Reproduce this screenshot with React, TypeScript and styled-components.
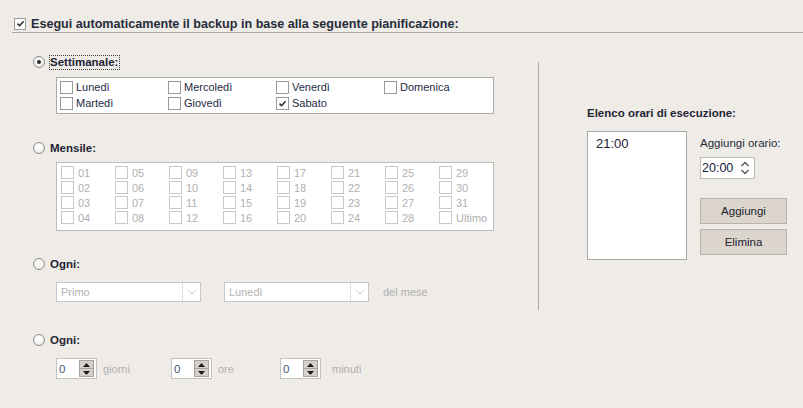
import styled, { createGlobalStyle } from 'styled-components';

const GlobalStyle = createGlobalStyle`
  html, body {
    margin: 0;
    padding: 0;
  }
  body {
    background: #efebe7;
    font-family: "Liberation Sans", Arial, sans-serif;
    font-size: 11px;
    color: #1f2a3c;
  }
`;

const Page = styled.div`
  width: 803px;
  height: 408px;
  overflow: hidden;
`;

const Header = styled.label`
  display: flex;
  align-items: center;
  gap: 5px;
  height: 15px;
  padding: 16px 0 0 14px;
`;

const HeaderTitle = styled.span`
  font-weight: bold;
  font-size: 12.6px;
  color: #262b3a;
`;

const Rule = styled.div`
  margin: 1px 0 0 12px;
  border-top: 1px solid #a8a8a8;
`;

const Main = styled.div`
  display: flex;
`;

const LeftCol = styled.div`
  box-sizing: border-box;
  width: 538px;
  padding-left: 33px;
  display: flex;
  flex-direction: column;
`;

const Divider = styled.div`
  width: 1px;
  height: 248px;
  margin-top: 29px;
  background: #aaa6a2;
`;

const RightCol = styled.div`
  padding: 73px 0 0 48px;
`;

/* checkbox + radio */

const Box = styled.span<{ $disabled?: boolean; $size?: number }>`
  box-sizing: border-box;
  flex: none;
  width: ${p => p.$size ?? 13}px;
  height: ${p => p.$size ?? 13}px;
  display: inline-flex;
  align-items: center;
  justify-content: center;
  background: #fff;
  border: 1px solid ${p => (p.$disabled ? '#c8c8c8' : '#9a9a9a')};
`;

const Check = () => (
  <svg width="9" height="9" viewBox="0 0 9 9">
    <path d="M1.5 4.6 L3.6 6.7 L7.6 2.2" fill="none" stroke="#2c2c2c" strokeWidth="1.6" />
  </svg>
);

const CheckBox = ({ checked, disabled, size }: { checked?: boolean; disabled?: boolean; size?: number }) => (
  <Box $disabled={disabled} $size={size}>
    {checked && <Check />}
  </Box>
);

const Option = styled.label<{ $disabled?: boolean; $gap?: number }>`
  display: flex;
  align-items: center;
  gap: ${p => p.$gap ?? 3}px;
  color: ${p => (p.$disabled ? '#b0b0b0' : '#1f2a44')};
  white-space: nowrap;
`;

const Radio = styled.span<{ $checked?: boolean }>`
  box-sizing: border-box;
  flex: none;
  width: 12px;
  height: 12px;
  border-radius: 50%;
  border: 1px solid #8c8c8c;
  background: radial-gradient(circle at 40% 35%, #ffffff 0%, #f2f2f2 60%, #dcdcdc 100%);
  display: flex;
  align-items: center;
  justify-content: center;

  &::after {
    content: '';
    display: ${p => (p.$checked ? 'block' : 'none')};
    width: 4px;
    height: 4px;
    border-radius: 50%;
    background: #2a2a2a;
  }
`;

const RadioRow = styled.label<{ $top: number }>`
  display: flex;
  align-items: center;
  gap: 4px;
  height: 16px;
  margin-top: ${p => p.$top}px;
`;

const RadioText = styled.span<{ $focused?: boolean }>`
  font-weight: bold;
  font-size: 11.5px;
  line-height: 13px;
  padding: 0 1px 0 0;
  color: #1f2535;
  border: 1px dotted ${p => (p.$focused ? '#404040' : 'transparent')};
`;

/* weekly / monthly grids */

const WeekBox = styled.div`
  box-sizing: border-box;
  width: 438px;
  height: 37px;
  margin: 7px 0 0 23px;
  padding: 1px 0 0 3px;
  background: #fff;
  border: 1px solid #a9a9a9;
  display: grid;
  grid-template-columns: repeat(4, 108px);
  grid-auto-rows: 16px;
`;

const MonthBox = styled.div`
  box-sizing: border-box;
  width: 438px;
  height: 69px;
  margin: 6px 0 0 23px;
  padding: 2px 0 0 4px;
  background: #fff;
  border: 1px solid #bcbcbc;
  display: grid;
  grid-auto-flow: column;
  grid-template-rows: repeat(4, 15px);
  grid-template-columns: repeat(8, 54px);
`;

/* selects */

const FieldRow = styled.div`
  display: flex;
  align-items: center;
  margin: 10px 0 0 23px;
`;

const Select = styled.div<{ $gapAfter: number }>`
  box-sizing: border-box;
  width: 145px;
  height: 20px;
  margin-right: ${p => p.$gapAfter}px;
  display: flex;
  background: #fff;
  border: 1px solid #c6c6c6;
`;

const SelectValue = styled.span`
  flex: 1;
  padding-left: 4px;
  line-height: 18px;
  color: #b2b2b2;
`;

const SelectArrow = styled.span`
  width: 17px;
  border-left: 1px solid #dedede;
  display: flex;
  align-items: center;
  justify-content: center;
`;

const DimText = styled.span`
  color: #b0b0b0;
`;

/* spin boxes */

const SpinGroup = styled.div<{ $width?: number }>`
  display: flex;
  align-items: center;
  gap: 6px;
  width: ${p => (p.$width ? `${p.$width}px` : 'auto')};
`;

const Spin = styled.div`
  box-sizing: border-box;
  width: 41px;
  height: 21px;
  display: flex;
  align-items: center;
  background: #fff;
  border: 1px solid #c2c2c2;
`;

const SpinValue = styled.span`
  flex: 1;
  padding-left: 2px;
  color: #4a5670;
  font-size: 11.5px;
`;

const SpinButtons = styled.div`
  width: 15px;
  height: 17px;
  margin-right: 2px;
  display: flex;
  flex-direction: column;
`;

const SpinHalf = styled.span`
  box-sizing: border-box;
  flex: 1;
  display: flex;
  align-items: center;
  justify-content: center;
  background: #d5d0c9;
  border: 1px solid #aaa49c;

  & + & {
    border-top: none;
  }
`;

const Triangle = ({ up }: { up?: boolean }) => (
  <svg width="7" height="4" viewBox="0 0 7 4">
    <path d={up ? 'M0 4 L3.5 0 L7 4 Z' : 'M0 0 L3.5 4 L7 0 Z'} fill="#1a1a1a" />
  </svg>
);

const SpinBox = ({ value }: { value: string }) => (
  <Spin>
    <SpinValue>{value}</SpinValue>
    <SpinButtons>
      <SpinHalf><Triangle up /></SpinHalf>
      <SpinHalf><Triangle /></SpinHalf>
    </SpinButtons>
  </Spin>
);

/* right panel */

const ListTitle = styled.div`
  font-weight: bold;
  font-size: 11.5px;
  line-height: 14px;
  color: #1f2535;
`;

const ListArea = styled.div`
  display: flex;
  margin-top: 11px;
`;

const TimeList = styled.div`
  box-sizing: border-box;
  width: 100px;
  height: 129px;
  padding: 5px 0 0 8px;
  background: #fff;
  border: 1px solid #a9a9a9;
  font-size: 13px;
  line-height: 14px;
  color: #1d2030;
`;

const SideCol = styled.div`
  display: flex;
  flex-direction: column;
  margin-left: 13px;
  padding-top: 5px;
`;

const SideLabel = styled.div`
  font-size: 11.5px;
  line-height: 14px;
  color: #262b3a;
`;

const TimeSpin = styled.div`
  box-sizing: border-box;
  width: 55px;
  height: 22px;
  margin-top: 7px;
  display: flex;
  align-items: center;
  background: #fff;
  border: 1px solid #bababa;
`;

const TimeValue = styled.span`
  flex: 1;
  padding-left: 1px;
  font-size: 12.5px;
  color: #15183a;
`;

const Chevrons = styled.span`
  width: 18px;
  display: flex;
  justify-content: center;
`;

const Button = styled.button<{ $top: number }>`
  box-sizing: border-box;
  width: 87px;
  height: 26px;
  margin-top: ${p => p.$top}px;
  padding: 0;
  background: #dcd5ce;
  border: 1px solid #b9b3ac;
  font-family: "Liberation Sans", Arial, sans-serif;
  font-size: 11.5px;
  color: #20232e;
`;

const weekDays = [
  { label: 'Lunedì' },
  { label: 'Mercoledì' },
  { label: 'Venerdì' },
  { label: 'Domenica' },
  { label: 'Martedì' },
  { label: 'Giovedì' },
  { label: 'Sabato', checked: true },
];

const monthDays = [
  ...Array.from({ length: 31 }, (_, i) => String(i + 1).padStart(2, '0')),
  'Ultimo',
];

const App = () => {
  return (
    <Page>
      <GlobalStyle />
      <Header>
        <CheckBox checked size={12} />
        <HeaderTitle>Esegui automaticamente il backup in base alla seguente pianificazione:</HeaderTitle>
      </Header>
      <Rule />

      <Main>
        <LeftCol>
          <RadioRow $top={21}>
            <Radio $checked />
            <RadioText $focused>Settimanale:</RadioText>
          </RadioRow>
          <WeekBox>
            {weekDays.map(d => (
              <Option key={d.label}>
                <CheckBox checked={d.checked} />
                {d.label}
              </Option>
            ))}
          </WeekBox>

          <RadioRow $top={26}>
            <Radio />
            <RadioText>Mensile:</RadioText>
          </RadioRow>
          <MonthBox>
            {monthDays.map(d => (
              <Option key={d} $disabled $gap={4}>
                <CheckBox disabled />
                {d}
              </Option>
            ))}
          </MonthBox>

          <RadioRow $top={25}>
            <Radio />
            <RadioText>Ogni:</RadioText>
          </RadioRow>
          <FieldRow>
            <Select $gapAfter={23}>
              <SelectValue>Primo</SelectValue>
              <SelectArrow>
                <svg width="8" height="5" viewBox="0 0 8 5">
                  <path d="M0.5 0.5 L4 4 L7.5 0.5" fill="none" stroke="#c4c4c4" strokeWidth="1" />
                </svg>
              </SelectArrow>
            </Select>
            <Select $gapAfter={14}>
              <SelectValue>Lunedì</SelectValue>
              <SelectArrow>
                <svg width="8" height="5" viewBox="0 0 8 5">
                  <path d="M0.5 0.5 L4 4 L7.5 0.5" fill="none" stroke="#c4c4c4" strokeWidth="1" />
                </svg>
              </SelectArrow>
            </Select>
            <DimText>del mese</DimText>
          </FieldRow>

          <RadioRow $top={30}>
            <Radio />
            <RadioText>Ogni:</RadioText>
          </RadioRow>
          <FieldRow>
            <SpinGroup $width={115}>
              <SpinBox value="0" />
              <DimText>giorni</DimText>
            </SpinGroup>
            <SpinGroup $width={109}>
              <SpinBox value="0" />
              <DimText>ore</DimText>
            </SpinGroup>
            <SpinGroup>
              <SpinBox value="0" />
              <DimText style={{ marginLeft: 5 }}>minuti</DimText>
            </SpinGroup>
          </FieldRow>
        </LeftCol>

        <Divider />

        <RightCol>
          <ListTitle>Elenco orari di esecuzione:</ListTitle>
          <ListArea>
            <TimeList>21:00</TimeList>
            <SideCol>
              <SideLabel>Aggiungi orario:</SideLabel>
              <TimeSpin>
                <TimeValue>20:00</TimeValue>
                <Chevrons>
                  <svg width="10" height="14" viewBox="0 0 10 14">
                    <path d="M1.5 5 L5 1.5 L8.5 5" fill="none" stroke="#555" strokeWidth="1.3" />
                    <path d="M1.5 9 L5 12.5 L8.5 9" fill="none" stroke="#555" strokeWidth="1.3" />
                  </svg>
                </Chevrons>
              </TimeSpin>
              <Button $top={19}>Aggiungi</Button>
              <Button $top={5}>Elimina</Button>
            </SideCol>
          </ListArea>
        </RightCol>
      </Main>
    </Page>
  );
};

export default App;
